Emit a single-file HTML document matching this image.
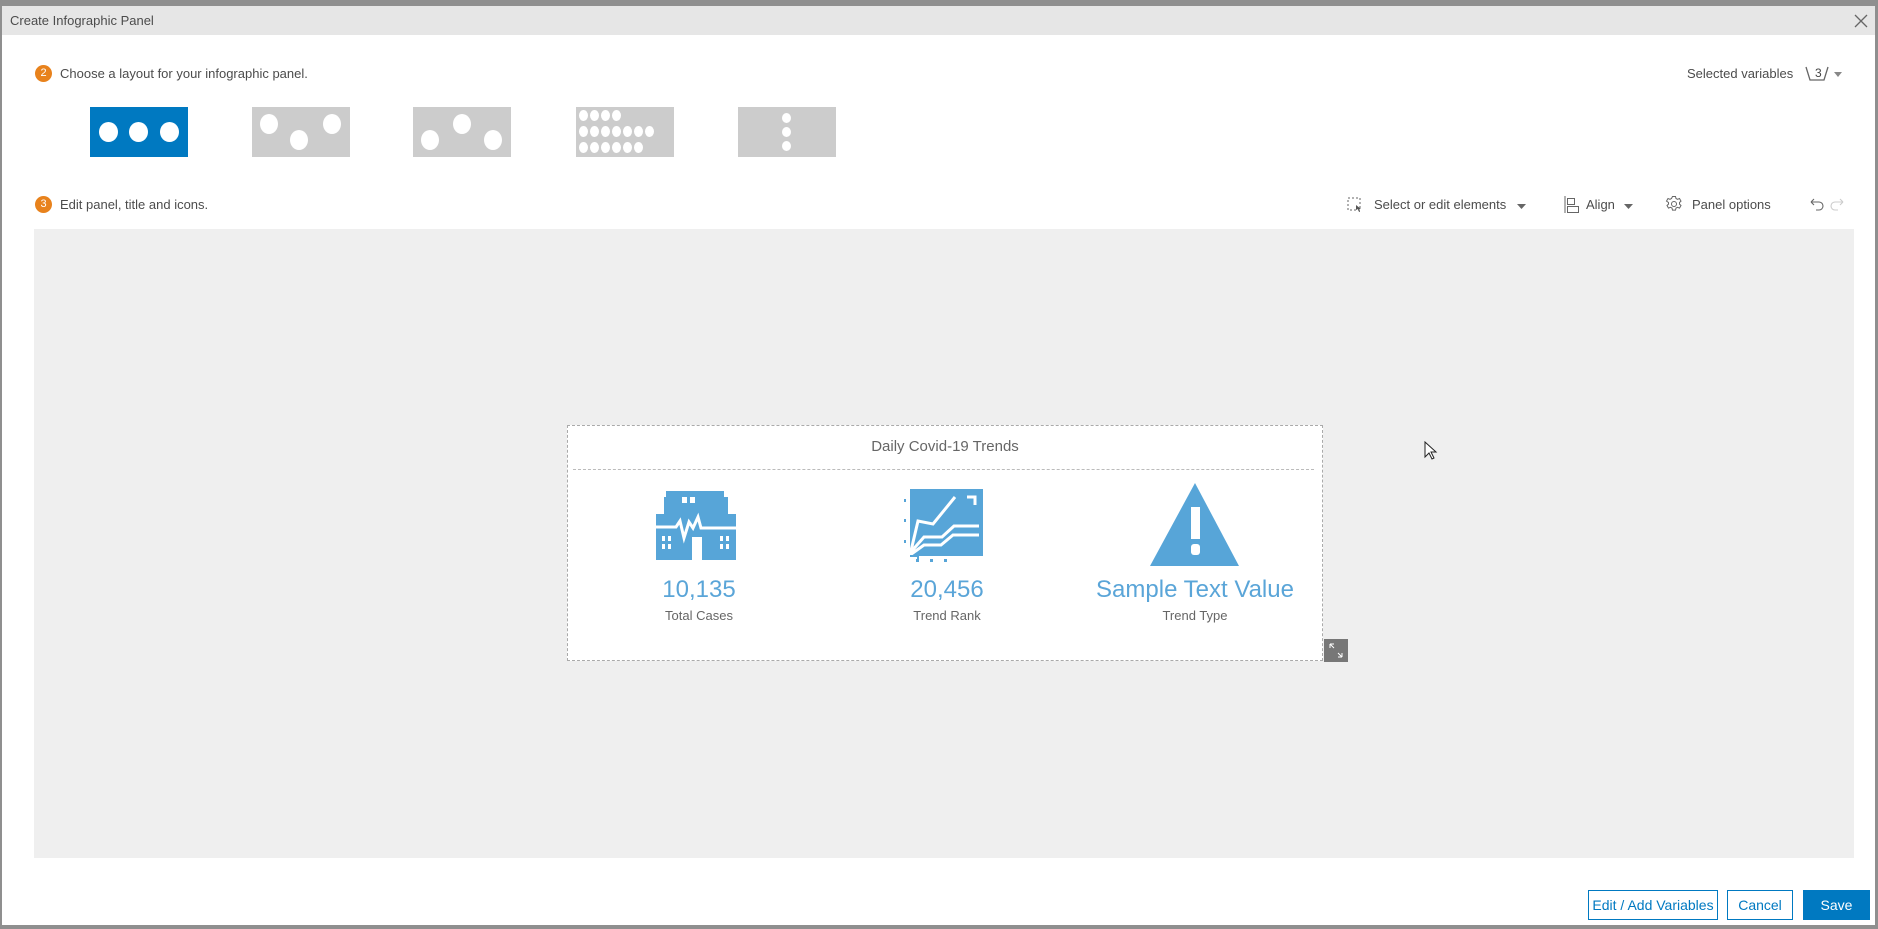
<!DOCTYPE html>
<html><head><meta charset="utf-8"><style>
*{box-sizing:border-box;margin:0;padding:0}
body{width:1878px;height:929px;background:#8f8f8f;font-family:"Liberation Sans",sans-serif;position:relative;overflow:hidden;color:#4c4c4c}
.dlg{position:absolute;left:2px;top:6px;width:1873px;height:919px;background:#fff}
.hdr{position:absolute;left:0;top:0;right:0;height:29px;background:#e6e6e6;font-size:13px;line-height:29px;padding-left:8px;color:#4c4c4c}
.abs{position:absolute}
.step{position:absolute;width:17px;height:17px;border-radius:50%;background:#e8821c;color:#fff;font-size:11px;text-align:center;line-height:17px}
.lbl{position:absolute;font-size:13px;color:#4c4c4c;white-space:nowrap}
.th{position:absolute;width:98px;height:50px;background:#ccc;top:101px}
.th i{position:absolute;background:#fff;border-radius:50%}
.canvas{position:absolute;left:32px;top:223px;width:1820px;height:629px;background:#efefef}
.panel{position:absolute;left:565px;top:419px;width:756px;height:236px;background:#fff;border:1px dashed #aaa}
.col{position:absolute;width:300px;text-align:center}
.val{font-size:24px;color:#5aa5d8;line-height:28px}
.sub{font-size:13px;color:#666;margin-top:4px}
.btn{position:absolute;top:884px;height:30px;border:1px solid #0079c1;color:#0079c1;font-size:14px;line-height:28px;text-align:center;background:#fff}
</style></head><body>
<div class="dlg">
<div class="hdr">Create Infographic Panel</div>
<svg class="abs" style="left:1852px;top:8px" width="14" height="14"><path d="M1 1L13 13M13 1L1 13" stroke="#666" stroke-width="1.3"/></svg>
<div class="step" style="left:33px;top:59px">2</div>
<div class="lbl" style="left:58px;top:60px">Choose a layout for your infographic panel.</div>
<div class="lbl" style="left:1685px;top:60px">Selected variables</div>
<svg class="abs" style="left:1802px;top:58px" width="40" height="20"><path d="M2 3L6 16H20L24 3" stroke="#666" fill="none" stroke-width="1.3"/><text x="11" y="13" font-size="12" fill="#444" font-family="Liberation Sans">3</text><path d="M30 8h8l-4 5z" fill="#888"/></svg>

<div class="th" style="left:88px;background:#0079c1"><i style="left:9px;top:15px;width:19px;height:20px"></i><i style="left:39px;top:15px;width:19px;height:20px"></i><i style="left:70px;top:15px;width:19px;height:20px"></i></div>
<div class="th" style="left:250px"><i style="left:8px;top:7px;width:18px;height:20px"></i><i style="left:38px;top:23px;width:18px;height:20px"></i><i style="left:71px;top:7px;width:18px;height:20px"></i></div>
<div class="th" style="left:411px"><i style="left:8px;top:23px;width:18px;height:20px"></i><i style="left:40px;top:7px;width:18px;height:20px"></i><i style="left:71px;top:23px;width:18px;height:20px"></i></div>
<div class="th" style="left:574px">
<i style="left:3px;top:3px;width:9px;height:11px"></i><i style="left:14px;top:3px;width:9px;height:11px"></i><i style="left:25px;top:3px;width:9px;height:11px"></i><i style="left:36px;top:3px;width:9px;height:11px"></i>
<i style="left:3px;top:19px;width:9px;height:11px"></i><i style="left:14px;top:19px;width:9px;height:11px"></i><i style="left:25px;top:19px;width:9px;height:11px"></i><i style="left:36px;top:19px;width:9px;height:11px"></i><i style="left:47px;top:19px;width:9px;height:11px"></i><i style="left:58px;top:19px;width:9px;height:11px"></i><i style="left:69px;top:19px;width:9px;height:11px"></i>
<i style="left:3px;top:35px;width:9px;height:11px"></i><i style="left:14px;top:35px;width:9px;height:11px"></i><i style="left:25px;top:35px;width:9px;height:11px"></i><i style="left:36px;top:35px;width:9px;height:11px"></i><i style="left:47px;top:35px;width:9px;height:11px"></i><i style="left:58px;top:35px;width:9px;height:11px"></i></div>
<div class="th" style="left:736px"><i style="left:44px;top:6px;width:9px;height:10px"></i><i style="left:44px;top:20px;width:9px;height:10px"></i><i style="left:44px;top:34px;width:9px;height:10px"></i></div>

<div class="step" style="left:33px;top:190px">3</div>
<div class="lbl" style="left:58px;top:191px">Edit panel, title and icons.</div>
<svg class="abs" style="left:1345px;top:191px" width="16" height="16"><rect x="1" y="1" width="12" height="12" fill="none" stroke="#666" stroke-dasharray="2 2"/><path d="M9 8l5 4-2 0 1 3-1 0-1-3-2 1z" fill="#555"/></svg>
<div class="lbl" style="left:1372px;top:191px">Select or edit elements</div>
<svg class="abs" style="left:1515px;top:198px" width="10" height="6"><path d="M0 0h9l-4.5 5z" fill="#666"/></svg>
<svg class="abs" style="left:1562px;top:190px" width="16" height="18"><path d="M1 0v17" stroke="#666"/><rect x="3.5" y="2.5" width="7" height="6" fill="none" stroke="#666"/><rect x="3.5" y="10.5" width="11" height="6" fill="none" stroke="#666"/></svg>
<div class="lbl" style="left:1584px;top:191px">Align</div>
<svg class="abs" style="left:1622px;top:198px" width="10" height="6"><path d="M0 0h9l-4.5 5z" fill="#666"/></svg>
<svg class="abs" style="left:1663px;top:189px" width="18" height="18" viewBox="0 0 18 18"><circle cx="9" cy="9" r="2.5" fill="none" stroke="#666"/><path d="M7.5 1.5h3l.5 2 1.5.8 2-.8 1.5 2.6-1.5 1.4v1.6l1.5 1.4-1.5 2.6-2-.8-1.5.8-.5 2h-3l-.5-2-1.5-.8-2 .8-1.5-2.6 1.5-1.4V7.5L1.5 6.1 3 3.5l2 .8 1.5-.8z" fill="none" stroke="#666"/></svg>
<div class="lbl" style="left:1690px;top:191px">Panel options</div>
<svg class="abs" style="left:1805px;top:191px" width="40" height="16"><path d="M4 5h8a4 4 0 010 8H9M4 5l3-3M4 5l3 3" fill="none" stroke="#666" stroke-width="1.1"/><path d="M36 5h-8a4 4 0 000 8h3M36 5l-3-3M36 5l-3 3" fill="none" stroke="#ccc" stroke-width="1.1"/></svg>

<div class="canvas"></div>
<div class="panel">
<div class="abs" style="left:0;right:0;top:12px;text-align:center;font-size:15px;color:#666">Daily Covid-19 Trends</div>
<div class="abs" style="left:5px;right:8px;top:43px;border-top:1px dashed #bbb"></div>
<svg class="abs" style="left:88px;top:65px" width="80" height="69" viewBox="0 0 80 69"><path d="M10 0h58v6h4v17h8v46H46V46h-10v23H0V23h8V6h2z" fill="#57a5d8"/><rect x="26" y="6" width="5" height="6" fill="#fff"/><rect x="34" y="6" width="5" height="6" fill="#fff"/><path d="M0 36h20l4-6 4 17 5-16 4 6 5-11 3 11h35" stroke="#fff" stroke-width="3" fill="none"/><rect x="6" y="45" width="3" height="5" fill="#fff"/><rect x="12" y="45" width="3" height="5" fill="#fff"/><rect x="6" y="53" width="3" height="5" fill="#fff"/><rect x="12" y="53" width="3" height="5" fill="#fff"/><rect x="64" y="45" width="3" height="5" fill="#fff"/><rect x="70" y="45" width="3" height="5" fill="#fff"/><rect x="64" y="53" width="3" height="5" fill="#fff"/><rect x="70" y="53" width="3" height="5" fill="#fff"/></svg>
<svg class="abs" style="left:336px;top:63px" width="80" height="73" viewBox="0 0 80 73"><rect x="6" y="0" width="73" height="67" fill="#57a5d8"/><rect x="0" y="10" width="2" height="3" fill="#57a5d8"/><rect x="0" y="30" width="2" height="3" fill="#57a5d8"/><rect x="0" y="51" width="2" height="3" fill="#57a5d8"/><rect x="12" y="70" width="3" height="3" fill="#57a5d8"/><rect x="26" y="70" width="3" height="3" fill="#57a5d8"/><rect x="40" y="70" width="3" height="3" fill="#57a5d8"/><path d="M6 66l8-34 15 3 22-27M63 8h8v8" stroke="#fff" stroke-width="3" fill="none"/><path d="M6 64l14-16h18l12-11h25M6 66l14-10h17l12-10h26" stroke="#fff" stroke-width="3" fill="none"/><path d="M6 67h8v5" stroke="#57a5d8" stroke-width="2" fill="none"/></svg>
<svg class="abs" style="left:582px;top:57px" width="90" height="83" viewBox="0 0 90 83"><path d="M45 0L89 83H0z" fill="#57a5d8"/><rect x="41" y="24" width="9" height="32" fill="#fff"/><rect x="41" y="61" width="9" height="11" rx="3" fill="#fff"/></svg>
<div class="col" style="left:-19px;top:150px"><div class="val">10,135</div><div class="sub">Total Cases</div></div>
<div class="col" style="left:229px;top:150px"><div class="val">20,456</div><div class="sub">Trend Rank</div></div>
<div class="col" style="left:477px;top:150px"><div class="val">Sample Text Value</div><div class="sub">Trend Type</div></div>
</div>
<div class="abs" style="left:1322px;top:633px;width:24px;height:23px;background:#777"><svg width="24" height="23"><path d="M6 5v4M6 5h4M6 5l4 4M18 18v-4M18 18h-4M18 18l-4-4" stroke="#fff" stroke-width="1"/></svg></div>
<svg class="abs" style="left:1422px;top:435px" width="14" height="20"><path d="M1 1v15l4-4 3 6 2-1-3-6h5z" fill="#fff" stroke="#222"/></svg>

<div class="btn" style="left:1586px;width:130px">Edit / Add Variables</div>
<div class="btn" style="left:1725px;width:66px">Cancel</div>
<div class="btn" style="left:1801px;width:67px;background:#0079c1;color:#fff">Save</div>
</div>
</body></html>
